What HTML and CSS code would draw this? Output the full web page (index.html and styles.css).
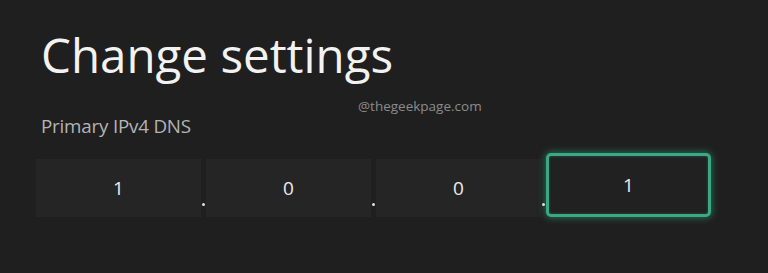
FILE: index.html
```html
<!DOCTYPE html>
<html>
<head>
<meta charset="utf-8">
<link rel="stylesheet" href="styles.css">
</head>
<body>
<div class="page">
  <h1 class="title">Change settings</h1>
  <div class="watermark">@thegeekpage.com</div>
  <div class="label">Primary IPv4 DNS</div>
  <div class="fields">
    <div class="cell"><div class="box">1</div><span class="dot"></span></div>
    <div class="cell"><div class="box">0</div><span class="dot"></span></div>
    <div class="cell"><div class="box">0</div><span class="dot"></span></div>
    <div class="cell"><div class="box focus">1</div></div>
  </div>
</div>
</body>
</html>
```
FILE: styles.css
```css
html, body {
  margin: 0;
  padding: 0;
  background: #1f1f1f;
  width: 768px;
  height: 273px;
  overflow: hidden;
}
.page {
  padding: 25px 0 0 41px;
  font-family: "Open Sans", "DejaVu Sans", sans-serif;
  color: #f0f0f0;
}
.title {
  margin: 0;
  font-size: 47.5px;
  font-weight: 400;
  line-height: 60px;
  color: #f2f2f2;
}
.watermark {
  margin: 11px 0 0 317px;
  font-size: 13.5px;
  line-height: 20px;
  color: #8c8c8c;
}
.label {
  margin-top: -1px;
  font-size: 18.8px;
  line-height: 22px;
  color: #b4b4b4;
  letter-spacing: -0.2px;
}
.fields {
  display: flex;
  margin: 20px 0 0 -5px;
}
.cell {
  display: flex;
  align-items: flex-end;
}
.box {
  width: 165px;
  height: 58px;
  background: #252525;
  display: flex;
  align-items: center;
  justify-content: center;
  font-size: 19px;
  font-weight: 500;
  color: #ececec;
  box-sizing: border-box;
}
.box.focus {
  height: 64px;
  border: 3px solid #3aa884;
  border-radius: 5px;
  background: #212121;
  box-shadow: 0 0 7px 1px rgba(50, 170, 130, 0.55), inset 0 0 3px rgba(50, 170, 130, 0.4);
}
.cell:last-child {
  margin-top: -4px;
  align-items: flex-start;
}
.dot {
  width: 5px;
  height: 14px;
  position: relative;
}
.dot::after {
  content: "";
  position: absolute;
  left: 1px;
  top: 0;
  width: 3px;
  height: 3px;
  border-radius: 50%;
  background: #e0e0e0;
}
```
